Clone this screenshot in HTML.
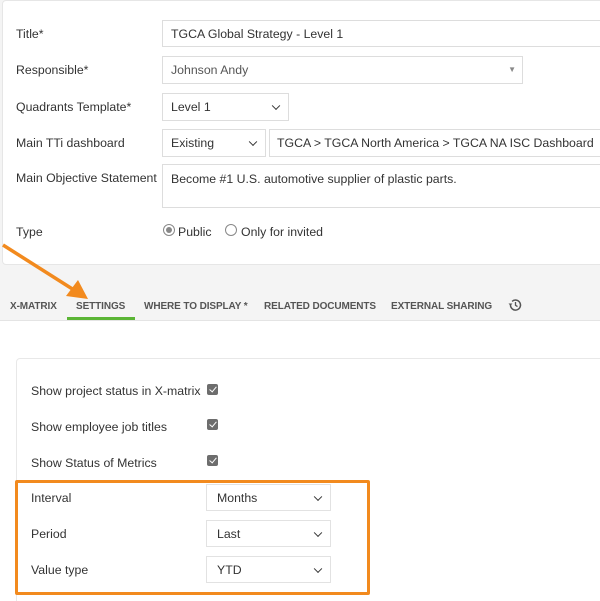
<!DOCTYPE html>
<html style="width:600px;height:601px;overflow:hidden"><head><meta charset="utf-8"><style>
*{box-sizing:border-box;margin:0;padding:0}
body{width:600px;height:601px;overflow:hidden;background:#f4f4f4;font-family:"Liberation Sans",sans-serif;font-size:12.3px;color:#333;position:relative}
.abs{position:absolute}
.card{left:2px;top:0;width:610px;height:265px;background:#fff;border:1px solid #e6e6e6;border-radius:4px}
.lbl{position:absolute;left:16px;font-size:12.3px;color:#333}
.inp{position:absolute;background:#fff;border:1px solid #ddd;font-size:12.3px;color:#333;padding-left:8px;display:flex;align-items:center}
.chev{position:absolute;right:9px;top:50%;width:6px;height:6px;border-right:1.6px solid #333;border-bottom:1.6px solid #333;transform:translateY(-70%) rotate(45deg)}
.tab{position:absolute;top:301px;font-size:10px;font-weight:bold;color:#555;letter-spacing:-0.1px}
.white{left:0;top:320px;width:600px;height:281px;background:#fff;border-top:1px solid #e4e4e4}
.inner{left:16px;top:358px;width:600px;height:260px;border:1px solid #e8e8e8;border-radius:4px;background:#fff}
.cb{position:absolute;left:207px;width:11px;height:11px;background:#6d6d6d;border-radius:2px}
.cb:after{content:"";position:absolute;left:3.5px;top:1px;width:3px;height:6px;border-right:1.5px solid #fff;border-bottom:1.5px solid #fff;transform:rotate(40deg)}
.sel{position:absolute;left:206px;width:125px;height:27px;background:#fff;border:1px solid #e2e2e2;padding-left:10px;display:flex;align-items:center;font-size:12.3px}
</style></head><body>
<div class="abs card"></div>
<div class="lbl" style="top:27px">Title*</div>
<div class="inp" style="left:162px;top:20px;width:440px;height:27px">TGCA Global Strategy - Level 1</div>
<div class="lbl" style="top:63px">Responsible*</div>
<div class="inp" style="left:162px;top:56px;width:361px;height:28px;color:#555">Johnson Andy<span style="position:absolute;right:6px;top:8px;font-size:8px;color:#888">▼</span></div>
<div class="lbl" style="top:100px">Quadrants Template*</div>
<div class="inp" style="left:162px;top:93px;width:127px;height:28px">Level 1<span class="chev"></span></div>
<div class="lbl" style="top:136px">Main TTi dashboard</div>
<div class="inp" style="left:162px;top:129px;width:104px;height:28px">Existing<span class="chev"></span></div>
<div class="inp" style="left:269px;top:129px;width:340px;height:28px;padding-left:7px">TGCA &gt; TGCA North America &gt; TGCA NA ISC Dashboard</div>
<div class="lbl" style="top:171px">Main Objective Statement</div>
<div class="inp" style="left:162px;top:164px;width:440px;height:44px;align-items:flex-start;padding-top:7px">Become #1 U.S. automotive supplier of plastic parts.</div>
<div class="lbl" style="top:225px">Type</div>
<div class="abs" style="left:163px;top:224px;width:12px;height:12px;border:1px solid #888;border-radius:50%;background:#fff"><div style="position:absolute;left:2px;top:2px;width:6px;height:6px;border-radius:50%;background:#888"></div></div>
<div class="abs" style="left:178px;top:225px">Public</div>
<div class="abs" style="left:225px;top:224px;width:12px;height:12px;border:1px solid #888;border-radius:50%;background:#fff"></div>
<div class="abs" style="left:241px;top:225px">Only for invited</div>

<div class="tab" style="left:10px">X-MATRIX</div>
<div class="tab" style="left:76px">SETTINGS</div>
<div class="tab" style="left:144px">WHERE TO DISPLAY *</div>
<div class="tab" style="left:264px">RELATED DOCUMENTS</div>
<div class="tab" style="left:391px">EXTERNAL SHARING</div>
<svg class="abs" style="left:507px;top:297px" width="16" height="16" viewBox="0 0 16 16"><path d="M3.5 8a5 5 0 1 0 1.6-3.6" fill="none" stroke="#555" stroke-width="1.5"/><path d="M1.5 6.5l2 2.2 2-2.2z" fill="#555"/><path d="M8.5 5v3.3l2 1.3" fill="none" stroke="#555" stroke-width="1.3"/></svg>

<div class="abs white"></div>
<div class="abs" style="left:67px;top:317px;width:68px;height:3px;background:#5bb535"></div>
<svg class="abs" style="left:0;top:238px" width="100" height="70"><line x1="3" y1="7" x2="74" y2="52" stroke="#f28a1e" stroke-width="3.5"/><path d="M88 61 L66 58 L78 42 Z" fill="#f28a1e"/></svg>

<div class="abs inner"></div>
<div class="lbl" style="left:31px;top:384px">Show project status in X-matrix</div>
<div class="cb" style="top:384px"></div>
<div class="lbl" style="left:31px;top:420px">Show employee job titles</div>
<div class="cb" style="top:419px"></div>
<div class="lbl" style="left:31px;top:456px">Show Status of Metrics</div>
<div class="cb" style="top:455px"></div>
<div class="abs" style="left:15px;top:480px;width:355px;height:115px;border:3px solid #f28a1e;border-radius:2px"></div>
<div class="lbl" style="left:31px;top:491px">Interval</div>
<div class="sel" style="top:484px">Months<span class="chev"></span></div>
<div class="lbl" style="left:31px;top:527px">Period</div>
<div class="sel" style="top:520px">Last<span class="chev"></span></div>
<div class="lbl" style="left:31px;top:563px">Value type</div>
<div class="sel" style="top:556px">YTD<span class="chev"></span></div>
</body></html>
